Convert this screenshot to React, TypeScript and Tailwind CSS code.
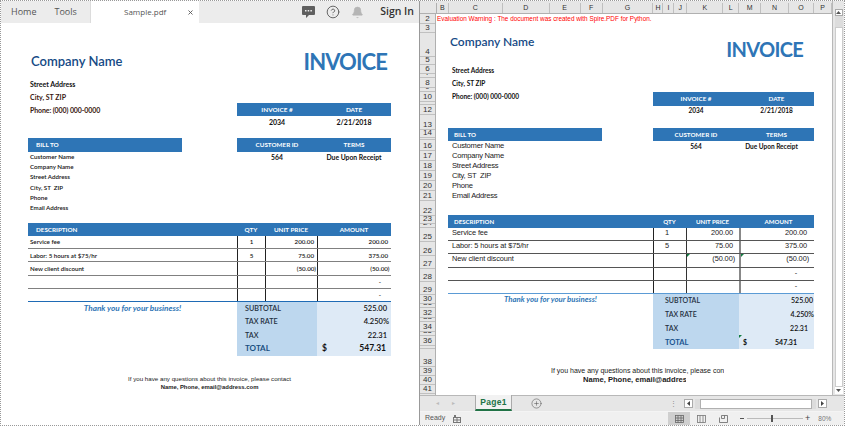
import { Bell, CircleHelp, CirclePlus, X } from 'lucide-react';

const colHeaders: [string, string][] = [
  ['B', 'w-[12px]'], ['C', 'w-[54px]'], ['D', 'w-[47px]'], ['E', 'w-[31px]'], ['F', 'w-[22px]'],
  ['G', 'w-[51px]'], ['H', 'w-[10px]'], ['I', 'w-[11px]'], ['J', 'w-[13px]'], ['K', 'w-[36px]'],
  ['L', 'w-[16px]'], ['M', 'w-[22px]'], ['N', 'w-[28px]'], ['O', 'w-[25px]'], ['P', 'w-[18px]'],
];

const rowHeaders: [string, string][] = [
  ['2', 'h-[10px]'], ['3', 'h-[9px]'], ['4', 'h-[24px]'], ['5', 'h-[8px]'], ['6', 'h-[9px]'], ['7', 'h-[4px]'],
  ['8', 'h-[10px]'], ['9', 'h-[4px]'], ['10', 'h-[10px]'], ['11', 'h-[3px]'], ['12', 'h-[10px]'], ['13', 'h-[15px]'],
  ['14', 'h-[8px]'], ['15', 'h-[2px]'], ['16', 'h-[11px]'], ['17', 'h-[10px]'], ['18', 'h-[10px]'], ['19', 'h-[10px]'],
  ['20', 'h-[10px]'], ['21', 'h-[10px]'], ['22', 'h-[15px]'], ['23', 'h-[8px]'], ['24', 'h-[4px]'], ['25', 'h-[14px]'],
  ['26', 'h-[14px]'], ['27', 'h-[13px]'], ['28', 'h-[13px]'], ['29', 'h-[13px]'], ['30', 'h-[9px]'], ['31', 'h-[4px]'],
  ['32', 'h-[10px]'], ['33', 'h-[4px]'], ['34', 'h-[10px]'], ['35', 'h-[4px]'], ['36', 'h-[10px]'], ['37', 'h-[3px]'],
  ['38', 'h-[18px]'], ['39', 'h-[9px]'], ['40', 'h-[9px]'], ['41', 'h-[9px]'],
];

const items = [
  { desc: 'Service fee', qty: '1', price: '200.00', amount: '200.00' },
  { desc: 'Labor: 5 hours at $75/hr', qty: '5', price: '75.00', amount: '375.00' },
  { desc: 'New client discount', qty: '', price: '(50.00)', amount: '(50.00)' },
  { desc: '', qty: '', price: '', amount: '-' },
  { desc: '', qty: '', price: '', amount: '-' },
];

const billTo = ['Customer Name', 'Company Name', 'Street Address', 'City, ST  ZIP', 'Phone', 'Email Address'];

function ErrorMark() {
  return (
    <svg width="3" height="3" viewBox="0 0 3 3" className="absolute left-0 top-0">
      <polygon points="0,0 3,0 0,3" fill="#107c41" />
    </svg>
  );
}

function PdfViewer() {
  return (
    <div className="w-[418px] flex flex-col bg-white font-['Lato',sans-serif] text-[#111]">
      <div className="h-[22px] flex items-stretch bg-[#ececec] text-[#555] font-['Open_Sans',sans-serif]">
        <div className="w-[90px] flex items-center border-r border-[#dcdcdc] text-[9px]">
          <span className="ml-[10px]">Home</span>
          <span className="ml-[18px]">Tools</span>
        </div>
        <div className="w-[108px] flex items-center bg-white text-[8px] relative">
          <span className="ml-[33px]">Sample.pdf</span>
          <X size={7} strokeWidth={3} className="absolute right-[5px] top-[8px]" />
        </div>
        <div className="flex-1 flex items-center justify-end pr-[5px]">
          <svg width="13" height="12" viewBox="0 0 13 12" className="mr-[11px]">
            <path d="M1 0h11a1 1 0 0 1 1 1v7a1 1 0 0 1-1 1H7l-3 3V9H1a1 1 0 0 1-1-1V1a1 1 0 0 1 1-1z" fill="#5f5f5f" />
            <rect x="3" y="4" width="1.5" height="1.5" fill="#eee" />
            <rect x="5.7" y="4" width="1.5" height="1.5" fill="#eee" />
            <rect x="8.4" y="4" width="1.5" height="1.5" fill="#eee" />
          </svg>
          <CircleHelp size={14} strokeWidth={1.5} className="mr-[11px] text-[#555]" />
          <Bell size={13} fill="#b5b5b5" strokeWidth={1} className="mr-[16px] text-[#b5b5b5]" />
          <span className="text-[10.5px] font-semibold text-[#333]">Sign In</span>
        </div>
      </div>

      <div className="pl-[27px] w-[390px]">
        <div className="mt-[27px] grid grid-cols-[209px_154px] h-[24px] items-center">
          <div className="pl-[3px] text-[13px] font-semibold text-[#154a85]">Company Name</div>
          <div className="pr-[4px] text-right text-[22px] leading-[24px] font-bold tracking-[-0.9px] text-[#2e75b6]">INVOICE</div>
        </div>
        <div className="mt-[4px] grid grid-cols-[209px_154px] h-[51px]">
          <div className="pl-[2px] text-[7px] font-bold">
            <div className="h-[13px] leading-[13px]">Street Address</div>
            <div className="h-[13px] leading-[13px] text-[#3a1a12]">City, ST  ZIP</div>
            <div className="h-[13px] leading-[13px] text-[#3a1a12] tracking-[-0.1px]">Phone: (000) 000-0000</div>
          </div>
          <div className="pt-[25px]">
            <div className="h-[13px] grid grid-cols-[80px_74px] items-center bg-[#2e75b6] text-white text-[6.4px] font-bold text-center">
              <span>INVOICE #</span>
              <span>DATE</span>
            </div>
            <div className="h-[13px] grid grid-cols-[80px_74px] items-center text-[7px] font-bold text-center">
              <span>2034</span>
              <span>2/21/2018</span>
            </div>
          </div>
        </div>
        <div className="mt-[9px] grid grid-cols-[209px_154px] h-[75px]">
          <div>
            <div className="w-[154px] h-[14px] pl-[8px] flex items-center bg-[#2e75b6] text-white text-[6.4px] font-bold">BILL TO</div>
            <div className="pl-[2px] text-[6.2px] font-semibold">
              {billTo.map(line => (
                <div key={line} className="h-[10.2px] leading-[10.2px] whitespace-pre">{line}</div>
              ))}
            </div>
          </div>
          <div>
            <div className="h-[14px] grid grid-cols-[80px_74px] items-center bg-[#2e75b6] text-white text-[6.3px] font-bold text-center">
              <span>CUSTOMER ID</span>
              <span>TERMS</span>
            </div>
            <div className="h-[10px] grid grid-cols-[80px_74px] items-center text-[6.8px] font-bold text-center">
              <span>564</span>
              <span>Due Upon Receipt</span>
            </div>
          </div>
        </div>
        <div className="mt-[10px] w-[363px]">
          <div className="h-[13px] grid grid-cols-[209px_28px_52px_74px] items-center bg-[#2e75b6] text-white text-[6.3px] font-bold text-center">
            <span className="pl-[8px] text-left">DESCRIPTION</span>
            <span>QTY</span>
            <span>UNIT PRICE</span>
            <span>AMOUNT</span>
          </div>
          {items.map((item, i) => (
            <div
              key={i}
              className={i === 4
                ? 'h-[13.2px] grid grid-cols-[209px_28px_52px_74px] items-center text-[6.2px] font-semibold border-b border-[#1f6bb5]'
                : 'h-[13.2px] grid grid-cols-[209px_28px_52px_74px] items-center text-[6.2px] font-semibold border-b border-[#808080]'}
            >
              <span className="pl-[2px]">{item.desc}</span>
              <span className="h-full flex items-center justify-center border-l border-[#222]">{item.qty}</span>
              <span className={item.price.startsWith('(')
                ? 'h-full flex items-center justify-end pr-[1px] border-l border-[#222]'
                : 'h-full flex items-center justify-end pr-[3px] border-l border-[#222]'}>{item.price}</span>
              <span className={item.amount === '-'
                ? 'h-full flex items-center justify-end pr-[10px] border-l border-[#222]'
                : item.amount.startsWith('(')
                  ? 'h-full flex items-center justify-end pr-[1.5px] border-l border-[#222]'
                  : 'h-full flex items-center justify-end pr-[3px] border-l border-[#222]'}>{item.amount}</span>
            </div>
          ))}
        </div>
        <div className="w-[363px] grid grid-cols-[209px_80px_74px]">
          <div className="pt-[1px] text-center text-[8.2px] font-bold italic text-[#2e75b6] leading-[10px]">Thank you for your business!</div>
          <div className="bg-[#bdd7ee] pl-[8px] text-[7.2px] font-semibold text-[#1f2f40]">
            <div className="h-[13.5px] leading-[13.5px]">SUBTOTAL</div>
            <div className="h-[13.5px] leading-[13.5px]">TAX RATE</div>
            <div className="h-[13.5px] leading-[13.5px]">TAX</div>
            <div className="h-[13.5px] leading-[13.5px] text-[8px] font-bold text-[#1a4f80]">TOTAL</div>
          </div>
          <div className="bg-[#deeaf6] text-right text-[7.5px] font-semibold">
            <div className="h-[13.5px] leading-[13.5px] pr-[4px]">525.00</div>
            <div className="h-[13.5px] leading-[13.5px] pr-[2px]">4.250%</div>
            <div className="h-[13.5px] leading-[13.5px] pr-[4px]">22.31</div>
            <div className="h-[13.5px] leading-[13.5px] pr-[5px] pl-[5px] flex justify-between font-bold text-[8.5px]">
              <span>$</span>
              <span>547.31</span>
            </div>
          </div>
        </div>
        <div className="mt-[18px] w-[363px] text-center font-['Liberation_Sans',sans-serif] text-[#222]">
          <div className="h-[9.5px] leading-[9.5px] text-[6.2px]">If you have any questions about this invoice, please contact</div>
          <div className="h-[9.5px] leading-[9.5px] text-[5.9px] font-bold">Name, Phone, email@address.com</div>
        </div>
      </div>
    </div>
  );
}

function Sheet() {
  return (
    <div className="flex-1 min-h-0 bg-white font-['Lato',sans-serif] text-[#111] overflow-hidden">
      <div className="h-[10px] pl-[1px] leading-[10px] text-[6.4px] text-[#ff0000] font-['Liberation_Sans',sans-serif] whitespace-nowrap">
        Evaluation Warning : The document was created with Spire.PDF for Python.
      </div>
      <div className="pl-[12px] w-[378px]">
        <div className="mt-[9px] grid grid-cols-[205px_161px] h-[28px]">
          <div className="pl-[2px] text-[12px] leading-[18px] font-semibold text-[#154a85]">Company Name</div>
          <div className="pr-[11px] text-right text-[20px] leading-[32px] font-bold tracking-[-0.7px] text-[#2e75b6]">INVOICE</div>
        </div>
        <div className="mt-[4px] grid grid-cols-[205px_161px] h-[51px]">
          <div className="pl-[4px] text-[6.5px] font-bold">
            <div className="h-[12px] leading-[12px]">Street Address</div>
            <div className="h-[14px] leading-[14px]">City, ST  ZIP</div>
            <div className="h-[12px] leading-[12px]">Phone: (000) 000-0000</div>
          </div>
          <div className="pt-[27px]">
            <div className="h-[14px] grid grid-cols-[86px_75px] items-center bg-[#2e75b6] text-white text-[6.3px] font-bold text-center">
              <span>INVOICE #</span>
              <span>DATE</span>
            </div>
            <div className="h-[10px] grid grid-cols-[86px_75px] items-center text-[6.5px] font-bold text-center">
              <span>2034</span>
              <span>2/21/2018</span>
            </div>
          </div>
        </div>
        <div className="mt-[12px] grid grid-cols-[205px_161px] h-[73px]">
          <div>
            <div className="w-[154px] h-[13px] pl-[6px] flex items-center bg-[#2e75b6] text-white text-[6.2px] font-bold">BILL TO</div>
            <div className="pl-[4px] text-[7.6px] tracking-[-0.25px] font-['Liberation_Sans',sans-serif] text-[#222]">
              {billTo.map(line => (
                <div key={line} className="h-[10px] leading-[10px] whitespace-pre">{line}</div>
              ))}
            </div>
          </div>
          <div>
            <div className="h-[13px] grid grid-cols-[86px_75px] items-center bg-[#2e75b6] text-white text-[6.3px] font-bold text-center">
              <span>CUSTOMER ID</span>
              <span>TERMS</span>
            </div>
            <div className="h-[12px] grid grid-cols-[86px_75px] items-center text-[6.5px] font-bold text-center">
              <span>564</span>
              <span className="pr-[10px]">Due Upon Receipt</span>
            </div>
          </div>
        </div>
        <div className="mt-[14px] w-[366px]">
          <div className="h-[13px] grid grid-cols-[205px_33px_53px_75px] items-center bg-[#2e75b6] text-white text-[6.1px] font-bold text-center">
            <span className="pl-[6px] text-left">DESCRIPTION</span>
            <span>QTY</span>
            <span>UNIT PRICE</span>
            <span className="pl-[4px]">AMOUNT</span>
          </div>
          {items.map((item, i) => (
            <div
              key={i}
              className={i === 4
                ? 'h-[13.2px] grid grid-cols-[205px_33px_53px_75px] text-[7.4px] tracking-[-0.1px] leading-[10px] font-["Liberation_Sans",sans-serif] text-[#222] border-b border-[#5b9bd5]'
                : 'h-[13.2px] grid grid-cols-[205px_33px_53px_75px] text-[7.4px] tracking-[-0.1px] leading-[10px] font-["Liberation_Sans",sans-serif] text-[#222] border-b border-[#555]'}
            >
              <span className="pl-[4px]">{item.desc}</span>
              <span className="h-full pl-[11px] border-l border-[#222]">{item.qty}</span>
              <span className={item.price.startsWith('(')
                ? 'relative h-full text-right pr-[4px] border-l border-[#333]'
                : 'relative h-full text-right pr-[6px] border-l border-[#333]'}>
                {i === 2 && <ErrorMark />}
                {item.price}
              </span>
              <span className={item.amount === '-'
                ? 'relative h-full text-right pr-[17px] border-l-2 border-[#888]'
                : item.amount.startsWith('(')
                  ? 'relative h-full text-right pr-[5px] border-l-2 border-[#888]'
                  : 'relative h-full text-right pr-[7px] border-l-2 border-[#888]'}>
                {i === 2 && <ErrorMark />}
                {item.amount}
              </span>
            </div>
          ))}
        </div>
        <div className="w-[366px] grid grid-cols-[205px_86px_75px]">
          <div className="text-center text-[7.8px] font-bold italic text-[#2e75b6] leading-[11px]">Thank you for your business!</div>
          <div className="bg-[#bdd7ee] pl-[12px] text-[7px] font-semibold text-[#1f2f40]">
            <div className="h-[13.75px] leading-[12px]">SUBTOTAL</div>
            <div className="h-[13.75px] leading-[13px]">TAX RATE</div>
            <div className="h-[13.75px] leading-[14px]">TAX</div>
            <div className="h-[13.75px] leading-[15px] text-[7.6px] font-bold text-[#1a5490]">TOTAL</div>
          </div>
          <div className="bg-[#deeaf6] text-right text-[7px] font-semibold">
            <div className="h-[13.75px] leading-[12px] pr-[1px]">525.00</div>
            <div className="h-[13.75px] leading-[13px]">4.250%</div>
            <div className="h-[13.75px] leading-[14px] pr-[6px]">22.31</div>
            <div className="relative h-[13.75px] leading-[15px] pr-[17px] pl-[4px] flex justify-between font-bold">
              <ErrorMark />
              <span>$</span>
              <span>547.31</span>
            </div>
          </div>
        </div>
        <div className="mt-[18px] font-['Liberation_Sans',sans-serif] text-[#222] whitespace-nowrap">
          <div className="ml-[103px] w-[173px] overflow-hidden h-[8px] leading-[8px] text-[7px]">If you have any questions about this invoice, please contact</div>
          <div className="ml-[135px] w-[103px] overflow-hidden h-[9px] leading-[9px] text-[7.6px] font-bold">Name, Phone, email@address.com</div>
        </div>
      </div>
    </div>
  );
}

function ExcelViewer() {
  return (
    <div className="flex-1 flex flex-col bg-[#e6e6e6] font-['Liberation_Sans',sans-serif]">
      <div className="h-[394px] flex">
        <div className="w-[412px] flex flex-col">
          <div className="h-[13px] pt-[2px] flex bg-[#e6e6e6] border-b border-[#b0b0b0]">
            <div className="w-[17px] border-r border-[#b0b0b0]" />
            {colHeaders.map(([name, width]) => (
              <div key={name} className={`${width} flex items-center justify-center border-r border-[#c0c0c0] text-[7px] text-[#333]`}>{name}</div>
            ))}
          </div>
          <div className="flex-1 min-h-0 flex">
            <div className="w-[16px] bg-[#e6e6e6] border-r border-[#b0b0b0] overflow-hidden">
              {rowHeaders.map(([name, height]) => (
                <div key={name} className={`${height} flex items-end justify-center overflow-hidden border-b border-[#c0c0c0] text-[8px] leading-[9px] text-[#333]`}>{name}</div>
              ))}
            </div>
            <Sheet />
          </div>
        </div>
        <div className="w-[12px] flex flex-col items-center bg-[#e6e6e6] border-l border-[#b8b8b8]">
          <div className="mt-[8px] w-[8px] h-[7px] bg-white border border-[#aaa] flex items-center justify-center">
            <svg width="5" height="3" viewBox="0 0 5 3"><polygon points="2.5,0 5,3 0,3" fill="#555" /></svg>
          </div>
          <div className="w-[8px] h-[11px] bg-[#dcdcdc]" />
          <div className="w-[8px] flex-1 bg-white border border-[#ccc]" />
          <div className="mb-[1px] w-[8px] h-[7px] bg-white flex items-center justify-center">
            <svg width="5" height="3" viewBox="0 0 5 3"><polygon points="0,0 5,0 2.5,3" fill="#555" /></svg>
          </div>
        </div>
      </div>
      <div className="h-[16px] flex items-center border-t border-[#b8b8b8] text-[#bbb] text-[6px]">
        <span className="ml-[16px]">◂</span>
        <span className="ml-[13px]">▸</span>
        <div className="ml-[20px] -mt-px self-start w-[37px] h-[16px] flex items-center justify-center bg-[#f2f2f2] border-x border-[#aaa] border-b-2 border-b-[#217346] text-[8.5px] font-bold tracking-[0.3px] text-[#217346]">Page1</div>
        <CirclePlus size={11} strokeWidth={1.2} className="ml-[19px] text-[#555]" />
        <span className="ml-[128px] text-[#888] text-[7px] leading-none">⋮</span>
        <div className="ml-[7px] w-[9px] h-[9px] bg-white border border-[#aaa] flex items-center justify-center">
          <svg width="3" height="5" viewBox="0 0 3 5"><polygon points="3,0 3,5 0,2.5" fill="#444" /></svg>
        </div>
        <div className="ml-[2px] w-[121px] h-[10px] pl-[5px] bg-[#dcdcdc]">
          <div className="w-[112px] h-full bg-white border border-[#b0b0b0]" />
        </div>
        <div className="ml-[2px] w-[9px] h-[9px] bg-white border border-[#aaa] flex items-center justify-center">
          <svg width="3" height="5" viewBox="0 0 3 5"><polygon points="0,0 3,2.5 0,5" fill="#444" /></svg>
        </div>
      </div>
      <div className="flex-1 flex items-center border-t border-[#f4f4f4] bg-[#f0f0f0] text-[7px] text-[#555]">
        <span className="ml-[5px] w-[24px]">Ready</span>
        <svg width="8" height="8" viewBox="0 0 8 8" className="ml-[4px]" fill="none" stroke="#777">
          <rect x="0.5" y="2.5" width="7" height="5" />
          <path d="M0.5 5h7M4 2.5v5" />
          <rect x="1" y="0" width="2" height="2" fill="#777" stroke="none" />
        </svg>
        <div className="ml-[207px] w-[22px] h-full flex items-center justify-center bg-[#cfcfcf]">
          <svg width="9" height="8" viewBox="0 0 9 8" fill="none" stroke="#666" strokeWidth="0.8">
            <rect x="0.5" y="0.5" width="8" height="7" />
            <path d="M3 0.5v7M6 0.5v7M0.5 3h8M0.5 5.5h8" />
          </svg>
        </div>
        <svg width="9" height="8" viewBox="0 0 9 8" fill="none" stroke="#777" strokeWidth="0.8" className="ml-[7px]">
          <rect x="0.5" y="0.5" width="8" height="7" />
          <path d="M3 0.5v7M6 0.5v7" />
        </svg>
        <svg width="9" height="8" viewBox="0 0 9 8" fill="none" stroke="#666" strokeWidth="0.8" className="ml-[13px]">
          <path d="M0.5 2.5v5h8v-7h-6v3h3v-3" />
        </svg>
        <span className="ml-[12px] w-[4px] h-px bg-[#555]" />
        <div className="relative ml-[3px] w-[56px] h-px bg-[#bbb]">
          <span className="absolute left-[24px] -top-[3px] w-[2px] h-[7px] bg-[#555]" />
        </div>
        <span className="ml-[2px] text-[9px] leading-none text-[#444]">+</span>
        <span className="ml-[8px] text-[6.5px] text-[#777]">80%</span>
      </div>
    </div>
  );
}

export default function App() {
  return (
    <div className="w-[845px] h-[426px] flex overflow-hidden border border-dotted border-[#999] bg-white">
      <PdfViewer />
      <div className="w-px bg-[#999]" />
      <ExcelViewer />
    </div>
  );
}
